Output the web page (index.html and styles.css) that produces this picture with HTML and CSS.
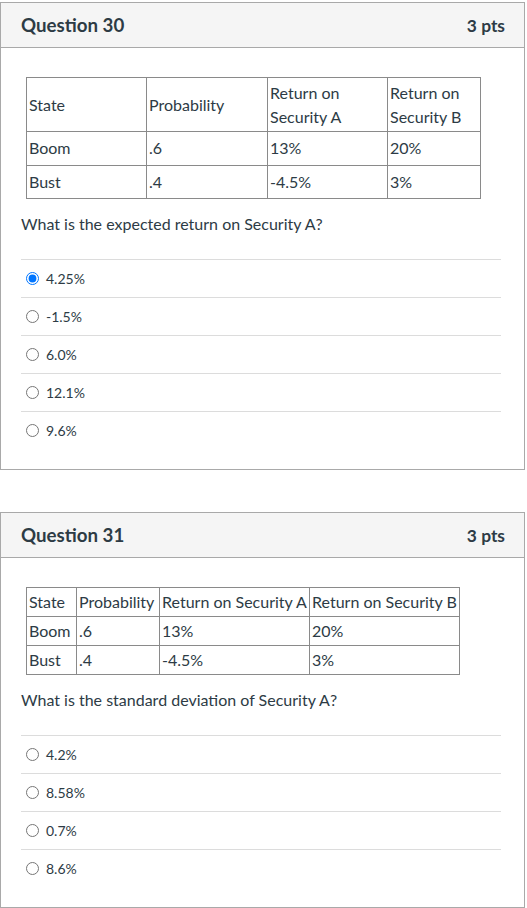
FILE: index.html
```html
<!DOCTYPE html>
<html lang="en">
<head>
<meta charset="utf-8">
<title>Quiz</title>
<link rel="stylesheet" href="styles.css">
</head>
<body>
<div class="page">
  <section class="question">
    <header class="q-header">
      <h2 class="q-title">Question 30</h2>
      <span class="q-pts">3 pts</span>
    </header>
    <div class="q-body">
      <table class="data data-wide">
        <colgroup><col class="c1"><col class="c2"><col class="c3"><col class="c4"></colgroup>
        <tr class="head"><td>State</td><td>Probability</td><td>Return on Security A</td><td>Return on Security B</td></tr>
        <tr><td>Boom</td><td>.6</td><td>13%</td><td>20%</td></tr>
        <tr><td>Bust</td><td>.4</td><td>-4.5%</td><td>3%</td></tr>
      </table>
      <p class="prompt">What is the expected return on Security A?</p>
      <ul class="answers">
        <li><label class="answer"><input type="radio" name="q30" checked><span>4.25%</span></label></li>
        <li><label class="answer"><input type="radio" name="q30"><span>-1.5%</span></label></li>
        <li><label class="answer"><input type="radio" name="q30"><span>6.0%</span></label></li>
        <li><label class="answer"><input type="radio" name="q30"><span>12.1%</span></label></li>
        <li><label class="answer"><input type="radio" name="q30"><span>9.6%</span></label></li>
      </ul>
    </div>
  </section>

  <section class="question">
    <header class="q-header">
      <h2 class="q-title">Question 31</h2>
      <span class="q-pts">3 pts</span>
    </header>
    <div class="q-body">
      <table class="data data-compact">
        <colgroup><col class="k1"><col class="k2"><col class="k3"><col class="k4"></colgroup>
        <tr><td>State</td><td>Probability</td><td>Return on Security A</td><td>Return on Security B</td></tr>
        <tr><td>Boom</td><td>.6</td><td>13%</td><td>20%</td></tr>
        <tr><td>Bust</td><td>.4</td><td>-4.5%</td><td>3%</td></tr>
      </table>
      <p class="prompt">What is the standard deviation of Security A?</p>
      <ul class="answers">
        <li><label class="answer"><input type="radio" name="q31"><span>4.2%</span></label></li>
        <li><label class="answer"><input type="radio" name="q31"><span>8.58%</span></label></li>
        <li><label class="answer"><input type="radio" name="q31"><span>0.7%</span></label></li>
        <li><label class="answer"><input type="radio" name="q31"><span>8.6%</span></label></li>
      </ul>
    </div>
  </section>
</div>
</body>
</html>
```

FILE: styles.css
```css
html, body {
  margin: 0;
  padding: 0;
  background: #fff;
}

body {
  font-family: Lato, "Open Sans", "Liberation Sans", sans-serif;
  font-size: 14px;
  color: #2d3b45;
}

.page {
  padding: 2px 2px 0 0;
}

.question {
  border: 1px solid #a9a9a9;
  background: #fff;
}

.question + .question {
  margin-top: 42px;
}

.q-header {
  box-sizing: border-box;
  height: 45px;
  background: #f5f5f5;
  border-bottom: 1px solid #a9a9a9;
  display: flex;
  align-items: center;
  justify-content: space-between;
  padding: 0 19px 0 20px;
}

.q-title {
  margin: 0;
  font-size: 18.7px;
  font-weight: 700;
  color: #2d3b45;
}

.q-pts {
  font-size: 17.4px;
  font-weight: 700;
  color: #2d3b45;
}

.q-body {
  padding: 29px 23px 20px 20px;
}

.data {
  border-collapse: collapse;
  margin-left: 5px;
  border: 1px solid #333;
  font-size: 16px;
  line-height: 24px;
}

.data td {
  border: 1px solid #8a8a8a;
  padding: 0 2px;
  vertical-align: middle;
  text-align: left;
}

.data-wide .c1 { width: 120px; }
.data-wide .c2 { width: 121px; }
.data-wide .c3 { width: 120px; }
.data-wide .c4 { width: 93px; }

.data-wide tr td {
  height: 32.5px;
}

.data-wide tr.head td {
  height: 53px;
}

.data-compact .k1 { width: 50px; }
.data-compact .k2 { width: 83px; }
.data-compact .k3 { width: 150px; }
.data-compact .k4 { width: 150px; }

.data-compact td {
  height: 28px;
  white-space: nowrap;
}

.prompt {
  margin: 13px 0 23px 0;
  font-size: 16px;
  line-height: 24px;
}

.answers {
  list-style: none;
  margin: 0;
  padding: 0;
}

.answers li {
  border-top: 1px solid #dcdcdc;
  height: 37px;
}

.answer {
  display: flex;
  align-items: center;
  height: 100%;
}

.answer input {
  margin: 0 7px 0 5px;
  width: 13px;
  height: 13px;
}
```
